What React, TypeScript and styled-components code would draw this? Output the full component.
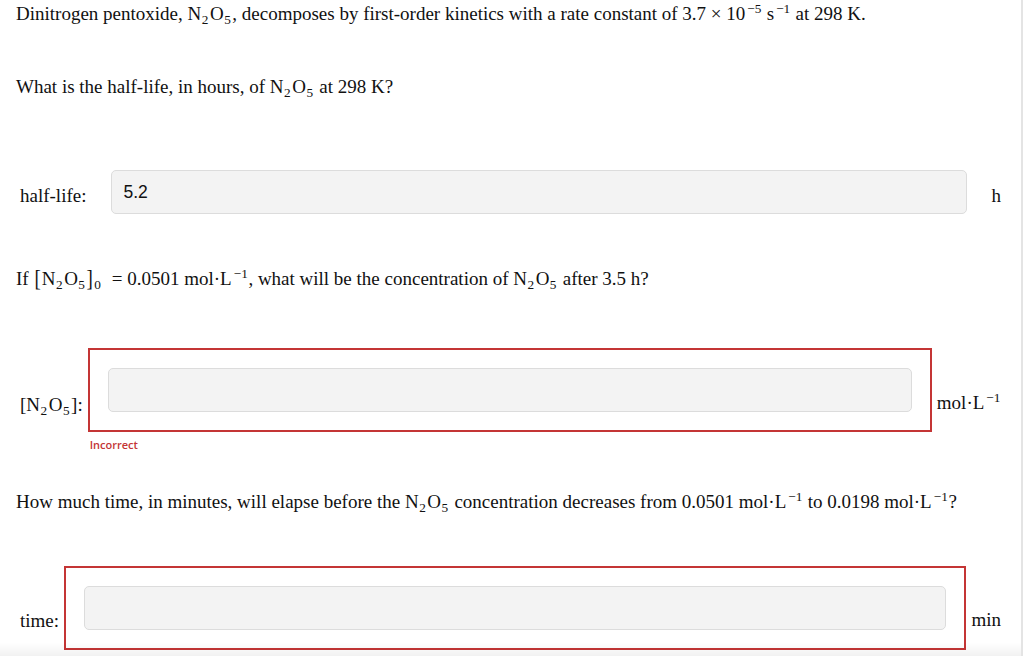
import React from "react";
import styled, { createGlobalStyle } from "styled-components";

const Global = createGlobalStyle`
  html, body { margin: 0; padding: 0; background: #fff; }
`;

const Page = styled.div`
  box-sizing: content-box;
  width: 1021px;
  min-height: 656px;
  border-right: 2px solid #e4e4e4;
  padding-top: 3px;
  font-family: "Liberation Serif", "DejaVu Serif", serif;
  color: #111;
  font-size: 19px;
  line-height: 22px;
`;

const Para = styled.p<{ $mt: number }>`
  margin: ${(p) => p.$mt}px 0 0 0;
  padding: 0 16px;
  white-space: nowrap;
`;

const Sub = styled.sub<{ $after?: number }>`
  font-size: 0.7em;
  line-height: 0;
  vertical-align: baseline;
  position: relative;
  top: 0.3em;
  margin: 0 ${(p) => p.$after ?? 1.5}px 0 0.5px;
`;

const Sup = styled.sup`
  font-size: 0.7em;
  line-height: 0;
  vertical-align: baseline;
  position: relative;
  top: -0.5em;
  margin: 0 0.5px 0 2px;
`;

const Bracket = styled.span<{ $close?: boolean }>`
  display: inline-block;
  margin: ${(p) => (p.$close ? "0 1px 0 0" : "0 1px 0 1px")};
  transform: scaleY(1.2);
  transform-origin: 50% 60%;
`;

const Row = styled.div<{ $mt: number }>`
  display: flex;
  align-items: flex-start;
  gap: 5px;
  margin-top: ${(p) => p.$mt}px;
  padding: 0 20px;
`;

const Label = styled.div<{ $top: number }>`
  padding-top: ${(p) => p.$top}px;
  white-space: nowrap;
`;

const Unit = styled.div<{ $top: number }>`
  padding-top: ${(p) => p.$top}px;
  white-space: nowrap;
`;

const AnswerCol = styled.div`
  flex: 1;
  display: flex;
  flex-direction: column;
  min-width: 0;
`;

const AnswerBox = styled.div<{ $wrong?: boolean }>`
  border: 2px solid ${(p) => (p.$wrong ? "#c43535" : "transparent")};
  padding: 18px;
`;

const Field = styled.div`
  box-sizing: border-box;
  height: 44px;
  border: 1.5px solid #dcdcdc;
  border-radius: 5px;
  background: #f3f3f3;
  padding: 12px 11px 0;
  font-family: "Liberation Sans", Arial, sans-serif;
  font-size: 17.5px;
  line-height: 18px;
  color: #111;
`;

const Feedback = styled.div`
  margin-top: 6px;
  padding-left: 2px;
  font-family: "Open Sans", "Liberation Sans", sans-serif;
  font-size: 11px;
  font-weight: 600;
  line-height: 14px;
  color: #c43535;
`;

const BottomFade = styled.div`
  position: fixed;
  left: 0;
  right: 3px;
  bottom: 0;
  height: 14px;
  pointer-events: none;
  background: linear-gradient(rgba(0, 0, 0, 0), rgba(0, 0, 0, 0.05));
`;

const N2O5 = () => (
  <>
    N<Sub>2</Sub>O<Sub>5</Sub>
  </>
);

const MolL = () => (
  <>
    mol·L<Sup>−1</Sup>
  </>
);

export default function App() {
  return (
    <>
      <Global />
      <Page>
        <Para $mt={0}>
          Dinitrogen pentoxide, <N2O5 />, decomposes by first-order kinetics with a rate constant of 3.7 × 10
          <Sup>−5</Sup> s<Sup>−1</Sup> at 298 K.
        </Para>
        <Para $mt={51}>
          What is the half-life, in hours, of <N2O5 /> at 298 K?
        </Para>

        <Row $mt={52}>
          <Label $top={35}>half-life:</Label>
          <AnswerCol>
            <AnswerBox>
              <Field>5.2</Field>
            </AnswerBox>
          </AnswerCol>
          <Unit $top={35}>h</Unit>
        </Row>

        <Para $mt={34}>
          {"If "}
          <Bracket>[</Bracket>
          <N2O5 />
          <Bracket $close>]</Bracket>
          <Sub $after={6}>0</Sub>
          {" = 0.0501 "}
          <MolL />, what will be the concentration of <N2O5 /> after 3.5 h?
        </Para>

        <Row $mt={58}>
          <Label $top={46}>
            [<N2O5 />]:
          </Label>
          <AnswerCol>
            <AnswerBox $wrong>
              <Field />
            </AnswerBox>
            <Feedback>Incorrect</Feedback>
          </AnswerCol>
          <Unit $top={44}>
            <MolL />
          </Unit>
        </Row>

        <Para $mt={39}>
          How much time, in minutes, will elapse before the <N2O5 /> concentration decreases from 0.0501 <MolL /> to
          0.0198 <MolL />?
        </Para>

        <Row $mt={53}>
          <Label $top={44}>time:</Label>
          <AnswerCol>
            <AnswerBox $wrong>
              <Field />
            </AnswerBox>
          </AnswerCol>
          <Unit $top={43}>min</Unit>
        </Row>
      </Page>
      <BottomFade />
    </>
  );
}
